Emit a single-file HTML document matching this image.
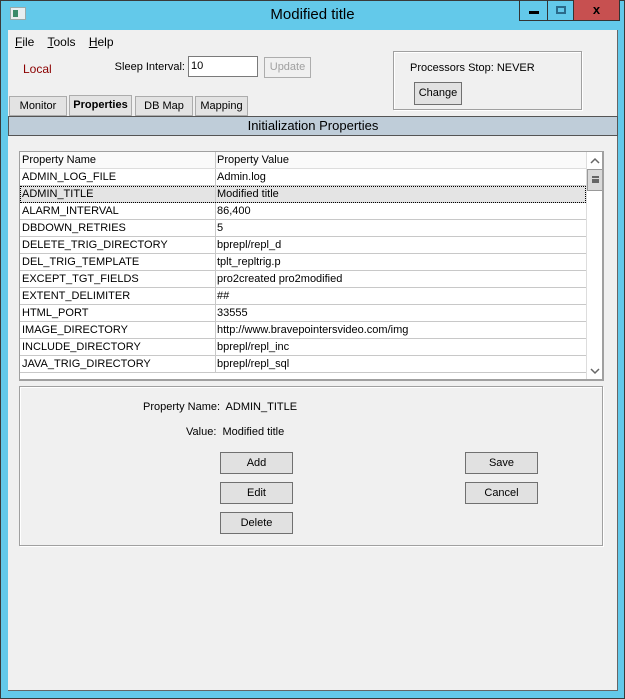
<!DOCTYPE html><html><head><style>
*{box-sizing:border-box;margin:0;padding:0}
body{width:625px;height:699px;position:relative;background:#63c9ea;font-family:"Liberation Sans",sans-serif;font-size:11px;color:#000;overflow:hidden}
.a{position:absolute}
.btn{position:absolute;background:#e1e1e1;border:1px solid #707070;text-align:center;font-size:11px}
.row{position:absolute;left:0;width:566px;height:17px;border-bottom:1px solid #c8c8c8;font-size:11px;line-height:16px}
.row .n{position:absolute;left:2px}
.row .v{position:absolute;left:197px}
.row i{position:absolute;left:195px;top:0;bottom:0;border-left:1px solid #c8c8c8}
</style></head><body>
<div class="a" style="left:0;top:0;width:625px;height:699px;border:1px solid #3a3a3a"></div>
<div class="a" style="left:10px;top:7px;width:16px;height:13px;background:#e8eef0;border:1px solid #9aa"></div>
<div class="a" style="left:13px;top:10px;width:5px;height:7px;background:#3a8a6a"></div>
<div class="a" style="left:0;width:625px;top:6px;text-align:center;font-size:15px">Modified title</div>
<div class="a" style="left:519px;top:0;width:29px;height:21px;border:1px solid #333;border-top:none"><div class="a" style="left:9px;top:11px;width:10px;height:3px;background:#000"></div></div>
<div class="a" style="left:547px;top:0;width:27px;height:21px;border:1px solid #333;border-top:none"><div class="a" style="left:8px;top:6px;width:10px;height:8px;border:2px solid #2a6a8a"></div></div>
<div class="a" style="left:573px;top:0;width:47px;height:21px;background:#c75050;border:1px solid #333;border-top:none;text-align:center;font-weight:bold;font-size:13px;line-height:20px">x</div>
<div class="a" style="left:8px;top:30px;width:610px;height:661px;background:#f0f0f0;border-right:1px solid #666;border-bottom:1px solid #666"></div>
<div class="a" style="left:15px;top:35px;font-size:12px"><u>F</u>ile &nbsp;&nbsp; <u>T</u>ools &nbsp;&nbsp; <u>H</u>elp</div>
<div class="a" style="left:23px;top:62px;color:#8b0000;font-size:12px">Local</div>
<div class="a" style="left:100px;width:85px;text-align:right;top:61px">Sleep Interval:</div>
<div class="a" style="left:188px;top:56px;width:70px;height:21px;background:#fff;border:1px solid #7a7a7a;padding:3px 2px">10</div>
<div class="a" style="left:264px;top:57px;width:47px;height:21px;border:1px solid #adadad;color:#a0a0a0;text-align:center;line-height:19px">Update</div>
<div class="a" style="left:393px;top:51px;width:189px;height:59px;border:1px solid #a0a0a0;box-shadow:inset 1px 1px 0 #fff,1px 1px 0 #fff"></div>
<div class="a" style="left:410px;top:62px">Processors Stop: NEVER</div>
<div class="btn" style="left:414px;top:82px;width:48px;height:23px;line-height:21px">Change</div>
<div class="a" style="left:9px;top:96px;width:58px;height:20px;border:1px solid #acacac;background:#e3e3e3;text-align:center;line-height:18px">Monitor</div>
<div class="a" style="left:69px;top:95px;width:63px;height:21px;border:1px solid #acacac;background:#e3e3e3;text-align:center;line-height:19px;font-weight:bold">Properties</div>
<div class="a" style="left:135px;top:96px;width:58px;height:20px;border:1px solid #acacac;background:#e3e3e3;text-align:center;line-height:18px">DB Map</div>
<div class="a" style="left:195px;top:96px;width:53px;height:20px;border:1px solid #acacac;background:#e3e3e3;text-align:center;line-height:18px">Mapping</div>
<div class="a" style="left:8px;top:116px;width:610px;height:20px;background:#bfcdd9;border:1px solid #555;text-align:center;font-size:13px;line-height:18px">Initialization Properties</div>
<div class="a" style="left:19px;top:151px;width:585px;height:230px;background:#fff;border:1px solid #a0a0a0;border-right:2px solid #a0a0a0;border-bottom:2px solid #a0a0a0;overflow:hidden">
<div class="row" style="top:0;background:#fafafa;border-bottom:1px solid #ddd"><span class="n">Property Name</span><i></i><span class="v">Property Value</span></div>
<div class="row" style="top:17px"><span class="n">ADMIN_LOG_FILE</span><i></i><span class="v">Admin.log</span></div>
<div class="row" style="top:34px;background:#e4e4e4;outline:1px dotted #000;outline-offset:-1px"><span class="n">ADMIN_TITLE</span><i></i><span class="v">Modified title</span></div>
<div class="row" style="top:51px"><span class="n">ALARM_INTERVAL</span><i></i><span class="v">86,400</span></div>
<div class="row" style="top:68px"><span class="n">DBDOWN_RETRIES</span><i></i><span class="v">5</span></div>
<div class="row" style="top:85px"><span class="n">DELETE_TRIG_DIRECTORY</span><i></i><span class="v">bprepl/repl_d</span></div>
<div class="row" style="top:102px"><span class="n">DEL_TRIG_TEMPLATE</span><i></i><span class="v">tplt_repltrig.p</span></div>
<div class="row" style="top:119px"><span class="n">EXCEPT_TGT_FIELDS</span><i></i><span class="v">pro2created pro2modified</span></div>
<div class="row" style="top:136px"><span class="n">EXTENT_DELIMITER</span><i></i><span class="v">##</span></div>
<div class="row" style="top:153px"><span class="n">HTML_PORT</span><i></i><span class="v">33555</span></div>
<div class="row" style="top:170px"><span class="n">IMAGE_DIRECTORY</span><i></i><span class="v">http://www.bravepointersvideo.com/img</span></div>
<div class="row" style="top:187px"><span class="n">INCLUDE_DIRECTORY</span><i></i><span class="v">bprepl/repl_inc</span></div>
<div class="row" style="top:204px"><span class="n">JAVA_TRIG_DIRECTORY</span><i></i><span class="v">bprepl/repl_sql</span></div>
<div class="a" style="left:566px;top:0;width:17px;height:228px;background:#fff;border-left:1px solid #ddd">
<svg class="a" style="left:3px;top:5px" width="10" height="7"><path d="M1 6 L5 2 L9 6" stroke="#666" stroke-width="1.5" fill="none"/></svg>
<div class="a" style="left:0;top:17px;width:16px;height:22px;background:#dadada;border:1px solid #999"><div class="a" style="left:4px;top:6px;width:7px;height:7px;border-top:2px solid #666;border-bottom:2px solid #666"></div><div class="a" style="left:4px;top:9px;width:7px;height:2px;background:#666"></div></div>
<svg class="a" style="left:3px;top:216px" width="10" height="7"><path d="M1 1 L5 5 L9 1" stroke="#666" stroke-width="1.5" fill="none"/></svg>
</div></div>
<div class="a" style="left:19px;top:386px;width:584px;height:160px;border:1px solid #a0a0a0;box-shadow:inset 1px 1px 0 #fff,1px 1px 0 #fff"></div>
<div class="a" style="left:143px;top:401px">Property Name:&nbsp; ADMIN_TITLE</div>
<div class="a" style="left:186px;top:426px">Value:&nbsp; Modified title</div>
<div class="btn" style="left:220px;top:452px;width:73px;height:22px;line-height:20px">Add</div>
<div class="btn" style="left:220px;top:482px;width:73px;height:22px;line-height:20px">Edit</div>
<div class="btn" style="left:220px;top:512px;width:73px;height:22px;line-height:20px">Delete</div>
<div class="btn" style="left:465px;top:452px;width:73px;height:22px;line-height:20px">Save</div>
<div class="btn" style="left:465px;top:482px;width:73px;height:22px;line-height:20px">Cancel</div>
</body></html>
